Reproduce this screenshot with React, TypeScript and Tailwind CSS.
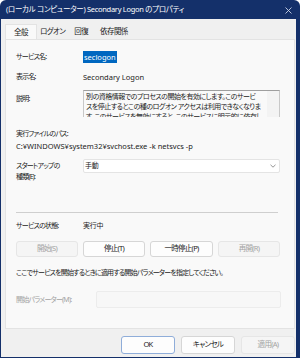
import React from "react";

function Btn({
  label,
  disabled,
  primary,
  className = "",
}: {
  label: string;
  disabled?: boolean;
  primary?: boolean;
  className?: string;
}) {
  return (
    <button
      type="button"
      className={`flex items-center justify-center rounded-[3px] border text-[7.5px] leading-none tracking-[-0.7px] ${
        disabled
          ? "border-[#e6e6e6] bg-[#f5f5f5] text-[#a3a3a3]"
          : primary
          ? "border-[#8fadd9] bg-[#fdfdfd] text-[#1b1b1b]"
          : "border-[#d6d6d6] bg-[#fdfdfd] text-[#1b1b1b]"
      } ${className}`}
    >
      {label}
    </button>
  );
}

export default function App() {
  const desc = [
    "別の資格情報でのプロセスの開始を有効にします。このサービ",
    "スを停止するとこの種のログオン アクセスは利用できなくなりま",
    "す。このサービスを無効にすると、このサービスに明示的に依存し",
  ];

  return (
    <div className="flex h-[358px] w-[300px] flex-col overflow-hidden rounded-t-[6px] bg-[#14306a] [font-family:'Noto_Sans','Noto_Sans_CJK_JP',sans-serif] [font-feature-settings:'palt'_1] [font-variant-east-asian:proportional-width]">
      {/* title bar */}
      <div className="flex h-[19px] shrink-0 items-center justify-between pl-[6px] pr-[8px] text-white">
        <span className="text-[7.5px] leading-none tracking-[-0.3px]">
          (ローカル コンピューター) Secondary Logon のプロパティ
        </span>
        <svg width="7" height="7" viewBox="0 0 7 7" className="mt-[2px]">
          <path d="M0.5 0.5L6.5 6.5M6.5 0.5L0.5 6.5" stroke="#c9d3e6" strokeWidth="0.9" />
        </svg>
      </div>

      {/* body */}
      <div className="ml-[1px] mr-[4px] mb-[1px] flex flex-1 flex-col bg-[#f0f0f0] text-[#1b1b1b]">
        {/* tabs */}
        <div className="flex h-[20px] items-end text-[7.5px] leading-none tracking-[-0.6px]">
          <div className="ml-[4px] flex h-[15px] w-[32px] items-center justify-center border border-b-0 border-[#e3e3e3] bg-[#f9f9f9] pt-[2px]">
            全般
          </div>
          <span className="mb-[4px] ml-[3px]">ログオン</span>
          <span className="mb-[4px] ml-[9px]">回復</span>
          <span className="mb-[4px] ml-[12px]">依存関係</span>
        </div>

        {/* panel */}
        <div className="ml-[4px] mr-[1px] flex h-[290px] flex-col border border-[#e3e3e3] bg-[#f9f9f9] pl-[10px] pt-[11px] text-[7px] leading-[12px] tracking-[-0.8px]">
          <div className="flex h-[12px] items-center">
            <span className="w-[67px]">サービス名:</span>
            <span className="bg-[#0067c0] px-[1px] text-[7.5px] tracking-normal text-white">seclogon</span>
          </div>

          <div className="mt-[8px] flex h-[12px] items-center">
            <span className="w-[67px]">表示名:</span>
            <span className="text-[7.5px] tracking-normal">Secondary Logon</span>
          </div>

          <div className="mt-[7px] flex">
            <span className="w-[67px] pt-[3px]">説明:</span>
            <div className="flex h-[27px] w-[197px] overflow-hidden border border-b-0 border-[#c8c8c8] border-t-[#9e9e9e]">
              <div className="flex-1 overflow-hidden pl-[2px] pt-[1px] leading-[10px] tracking-[-0.5px]">
                {desc.map((l) => (
                  <div key={l} className="whitespace-nowrap">
                    {l}
                  </div>
                ))}
              </div>
              <div className="w-[12px] shrink-0 bg-[#f3f3f3]" />
            </div>
          </div>

          <div className="mt-[11px] h-[12px]">実行ファイルのパス:</div>
          <div className="h-[12px] text-[7.5px] tracking-normal">C:¥WINDOWS¥system32¥svchost.exe -k netsvcs -p</div>

          <div className="mt-[7px] flex">
            <div className="w-[67px] pt-[1px] leading-[11px]">
              スタートアップの
              <br />
              種類(E):
            </div>
            <div className="flex h-[14px] w-[197px] items-center justify-between rounded-[2px] border border-[#e4e4e4] bg-white pl-[1px] pr-[3px]">
              <span className="tracking-[-0.3px]">手動</span>
              <svg width="6" height="4" viewBox="0 0 6 4">
                <path d="M0.5 0.8L3 3.2L5.5 0.8" fill="none" stroke="#7a7a7a" strokeWidth="0.8" />
              </svg>
            </div>
          </div>

          <div className="mt-[30px] mr-[16px] h-px bg-[#cfcfcf]" />

          <div className="mt-[7px] flex h-[12px] items-center">
            <span className="w-[67px]">サービスの状態:</span>
            <span className="tracking-[-0.3px]">実行中</span>
          </div>

          <div className="mt-[9px] flex h-[16px] gap-[5px]">
            <Btn label="開始(S)" disabled className="w-[62px]" />
            <Btn label="停止(T)" className="w-[62px]" />
            <Btn label="一時停止(P)" className="w-[63px]" />
            <Btn label="再開(R)" disabled className="w-[62px]" />
          </div>

          <div className="mt-[10px] h-[12px] whitespace-nowrap">
            ここでサービスを開始するときに適用する開始パラメーターを指定してください。
          </div>

          <div className="mt-[12px] flex items-center">
            <span className="w-[80px] text-[#a3a3a3]">開始パラメーター(M):</span>
            <div className="h-[17px] w-[185px] rounded-[2px] border border-[#ececec] bg-[#f7f7f7]" />
          </div>
        </div>

        {/* dialog buttons */}
        <div className="mt-[7px] flex justify-end gap-[6px] pr-[1px]">
          <Btn label="OK" primary className="h-[18px] w-[54px]" />
          <Btn label="キャンセル" className="h-[18px] w-[54px]" />
          <Btn label="適用(A)" disabled className="h-[18px] w-[54px]" />
        </div>
      </div>
    </div>
  );
}
